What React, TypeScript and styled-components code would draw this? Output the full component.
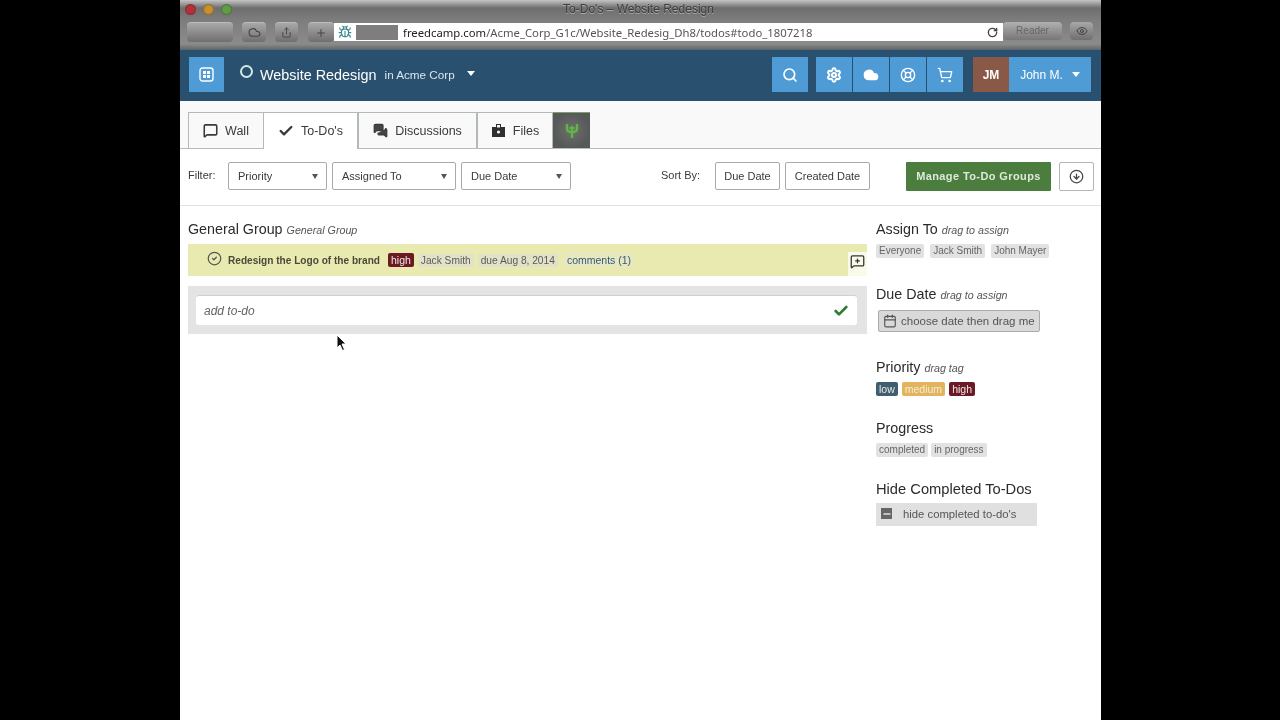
import styled, { createGlobalStyle } from "styled-components";
import {
  Calendar,
  Check,
  CircleCheck,
  CircleArrowDown,
  Cloud,
  LifeBuoy,
  MessageSquare,
  MessageSquarePlus,
  MessagesSquare,
  Minus,
  Plus,
  RotateCw,
  Search,
  Settings,
  ShoppingCart,
  Eye,
  Share,
  Bug,
} from "lucide-react";

const GlobalStyle = createGlobalStyle`
  html, body { margin: 0; padding: 0; background: #000; }
  body { font-family: "Liberation Sans", Arial, sans-serif; color: #333; }
`;

const Screen = styled.div`
  width: 1280px;
  height: 720px;
  display: flex;
  justify-content: center;
  background: #000;
  overflow: hidden;
  position: relative;
`;

const Win = styled.div`
  width: 921px;
  margin-left: 1px;
  height: 720px;
  display: flex;
  flex-direction: column;
  background: #fff;
  filter: blur(0.35px);
`;

/* browser chrome */
const Chrome = styled.div`
  height: 50px;
  flex: none;
  background: linear-gradient(#c4c4c4 0, #6e6e6e 8px, #7d7d7d 20px, #8b8b8b 44px, #5d6468 50px);
  display: flex;
  flex-direction: column;
`;
const TitleBar = styled.div`
  height: 21px;
  flex: none;
  display: flex;
  align-items: center;
  padding-left: 5px;
`;
const Lights = styled.div`
  display: flex;
  gap: 7px;
  margin-top: -2px;
`;
const Light = styled.span<{ $c: string }>`
  width: 11px;
  height: 11px;
  border-radius: 50%;
  background: ${(p) => p.$c};
  box-shadow: inset 0 0 2px #333;
`;
const WinTitle = styled.div`
  flex: 1;
  text-align: center;
  margin-left: -56px;
  margin-top: -3px;
  font-size: 12px;
  color: #3c3c3c;
  text-shadow: 0 1px 0 #aaa;
`;
const ToolRow = styled.div`
  height: 20px;
  margin-top: 1px;
  display: flex;
  align-items: stretch;
  padding-left: 7px;
`;
const ToolBtn = styled.div<{ $w: number; $mr: number }>`
  width: ${(p) => p.$w}px;
  margin-right: ${(p) => p.$mr}px;
  border-radius: 4px;
  background: linear-gradient(#a8a8a8, #6f6f6f);
  border-top: 1px solid #bbb;
  box-sizing: border-box;
  display: flex;
  align-items: center;
  justify-content: center;
  color: #444;
`;
const Address = styled.div`
  width: 669px;
  background: #fff;
  display: flex;
  align-items: center;
  height: 18px;
  margin-top: 1px;
  padding: 0 5px 0 4px;
  box-sizing: border-box;
  font-family: "Noto Sans", sans-serif;
  font-size: 11.3px;
  color: #555;
`;
const FavIcon = styled.span`
  color: #3e8a94;
  display: flex;
  margin-right: 4px;
`;
const Masked = styled.span`
  width: 42px;
  height: 15px;
  background: #7e7e7e;
  margin-right: 5px;
  flex: none;
`;
const Domain = styled.span`
  color: #222;
`;
const Url = styled.span`
  flex: 1;
  white-space: nowrap;
`;
const Reader = styled.div`
  width: 59px;
  height: 18px;
  border-radius: 4px;
  background: linear-gradient(#b0b0b0, #777);
  color: #666;
  font-size: 10px;
  text-align: center;
  line-height: 18px;
`;
const EyeBtn = styled.div`
  width: 23px;
  margin-left: 8px;
  height: 18px;
  border-radius: 4px;
  background: linear-gradient(#a8a8a8, #6f6f6f);
  display: flex;
  align-items: center;
  justify-content: center;
  color: #444;
`;

/* app header */
const Header = styled.header`
  height: 51px;
  flex: none;
  box-sizing: border-box;
  background: #2a5070;
  display: flex;
  align-items: center;
  padding: 0 10px 2px 9px;
  color: #fff;
`;
const HeadBtn = styled.div<{ $w?: number; $bg?: string }>`
  width: ${(p) => p.$w ?? 36}px;
  height: 35px;
  background: ${(p) => p.$bg ?? "#4f9bd5"};
  display: flex;
  align-items: center;
  justify-content: center;
  color: #fff;
  font-size: 12px;
  font-weight: 700;
  gap: 9px;
  flex: none;
`;
const HeadGroup = styled.div<{ $ml: number }>`
  display: flex;
  gap: 1px;
  margin-left: ${(p) => p.$ml}px;
`;
const Ring = styled.span`
  width: 9px;
  height: 9px;
  border: 2px solid #d5e8e4;
  border-radius: 50%;
  margin: -6px 7px 0 16px;
`;
const ProjectName = styled.span`
  font-size: 14.4px;
`;
const ProjectOrg = styled.span`
  font-size: 11.7px;
  color: #dbe6ee;
  margin-left: 8px;
`;
const Caret = styled.span<{ $c?: string }>`
  width: 0;
  height: 0;
  border-left: 4px solid transparent;
  border-right: 4px solid transparent;
  border-top: 5px solid ${(p) => p.$c ?? "#fff"};
`;
const ProjectCaret = styled(Caret)`
  margin: -3px 0 0 12px;
`;
const Grow = styled.div`
  flex: 1;
`;
const UserName = styled.span`
  font-weight: 400;
`;

/* tabs */
const TabBar = styled.nav`
  height: 48px;
  flex: none;
  box-sizing: border-box;
  background: #f9f9f9;
  border-bottom: 1px solid #b9bcbc;
  display: flex;
  align-items: flex-end;
  padding-left: 8px;
`;
const Tab = styled.div<{ $w: number; $active?: boolean }>`
  width: ${(p) => p.$w}px;
  box-sizing: border-box;
  margin-bottom: ${(p) => (p.$active ? "-1px" : "0")};
  height: ${(p) => (p.$active ? "37px" : "36px")};
  background: ${(p) => (p.$active ? "#fff" : "#f9f9f9")};
  border: 1px solid #b3b8b8;
  border-bottom: none;
  border-left-width: ${(p) => (p.$active ? "0" : "1px")};
  display: flex;
  align-items: center;
  justify-content: center;
  gap: 7px;
  font-size: 12.5px;
  color: #3a3a3a;
`;
const AddTab = styled.div`
  width: 37px;
  height: 36px;
  background: radial-gradient(circle at 50% 50%, #6d7068, #56595a 70%);
  border-top: 1px solid #7da06a;
  box-sizing: border-box;
  display: flex;
  align-items: center;
  justify-content: center;
`;

/* filters */
const FilterBar = styled.div`
  height: 57px;
  flex: none;
  box-sizing: border-box;
  border-bottom: 1px solid #e2e2e2;
  display: flex;
  align-items: center;
  padding: 0 7px 2px 8px;
  font-size: 11px;
  color: #3a3a3a;
`;
const FilterLabel = styled.span<{ $w: number }>`
  width: ${(p) => p.$w}px;
  margin-top: -2px;
  flex: none;
`;
const Select = styled.div<{ $w: number }>`
  width: ${(p) => p.$w}px;
  height: 28px;
  box-sizing: border-box;
  border: 1px solid #aaa;
  border-radius: 2px;
  margin-right: 5px;
  padding: 0 8px 0 9px;
  display: flex;
  align-items: center;
  justify-content: space-between;
  background: #fff;
  flex: none;
`;
const SelectCaret = styled(Caret)`
  border-left-width: 3px;
  border-right-width: 3px;
  border-top-color: #555;
`;
const SortBtn = styled(Select)`
  justify-content: center;
  padding: 0;
`;
const Manage = styled.div`
  width: 145px;
  height: 29px;
  background: #4b7d3e;
  color: #dfe9da;
  border-radius: 1px;
  font-size: 11px;
  font-weight: 700;
  letter-spacing: 0.4px;
  display: flex;
  align-items: center;
  justify-content: center;
  margin-left: 31px;
  flex: none;
`;
const DownBtn = styled.div`
  width: 35px;
  height: 29px;
  box-sizing: border-box;
  border: 1px solid #b5b5b5;
  border-radius: 2px;
  margin-left: 8px;
  display: flex;
  align-items: center;
  justify-content: center;
  color: #444;
`;

/* body */
const Content = styled.div`
  flex: 1;
  display: flex;
  padding: 14px 0 0 8px;
`;
const Main = styled.main`
  width: 679px;
  flex: none;
`;
const Side = styled.aside`
  margin-left: 9px;
  flex: 1;
`;
const Heading = styled.h3`
  margin: 0;
  font-size: 14.3px;
  font-weight: 400;
  line-height: 18px;
  color: #2b2b2b;
`;
const WideHeading = styled(Heading)`
  font-size: 14.7px;
`;
const Hint = styled.em`
  font-size: 10.7px;
  line-height: 1;
  color: #555;
  margin-left: 4px;
`;
const TodoRow = styled.div`
  margin-top: 6px;
  height: 32px;
  background: #e9eab0;
  display: flex;
  align-items: center;
  padding-left: 19px;
  font-size: 11px;
  position: relative;
`;
const TodoTitle = styled.span`
  color: #4a4a3c;
  font-weight: 700;
  font-size: 10.1px;
  margin: 0 8px 0 6px;
`;
const DoneIcon = styled.span`
  color: #555;
  display: flex;
  margin-top: -3px;
`;
const Badge = styled.span<{ $bg: string; $fg?: string }>`
  display: inline-flex;
  align-items: center;
  height: 14px;
  padding: 0 3px;
  border-radius: 2px;
  background: ${(p) => p.$bg};
  color: ${(p) => p.$fg ?? "#f0e6e6"};
  font-size: 10.5px;
`;
const Meta = styled.span<{ $link?: boolean }>`
  background: ${(p) => (p.$link ? "#e6e8c0" : "#e2e2c8")};
  color: ${(p) => (p.$link ? "#37587a" : "#5a5a5a")};
  font-size: ${(p) => (p.$link ? "10.5px" : "10.2px")};
  padding: 1px 3px;
  margin-left: ${(p) => (p.$link ? "6px" : "4px")};
`;
const CommentAdd = styled.div`
  position: absolute;
  right: 0;
  top: 8px;
  width: 19px;
  height: 24px;
  padding-top: 2px;
  box-sizing: border-box;
  background: #fafae8;
  color: #333;
  display: flex;
  align-items: flex-start;
  justify-content: center;
`;
const AddBox = styled.div`
  margin-top: 10px;
  height: 48px;
  background: #e4e4e4;
  padding: 9px 10px 9px 8px;
  box-sizing: border-box;
`;
const AddInput = styled.div`
  height: 30px;
  background: #fff;
  border-top: 1px solid #d0d0d0;
  border-radius: 3px;
  box-sizing: border-box;
  display: flex;
  align-items: center;
  justify-content: space-between;
  padding: 0 8px;
  font-size: 12px;
  font-style: italic;
  color: #666;
`;
const GreenCheck = styled.span`
  color: #2e7d32;
  display: flex;
`;
const Chips = styled.div<{ $gap?: number; $mt?: number }>`
  display: flex;
  gap: ${(p) => p.$gap ?? 6}px;
  margin-top: ${(p) => p.$mt ?? 6}px;
  height: 14px;
`;
const Chip = styled.span`
  background: #e2e2e2;
  color: #666;
  font-size: 10px;
  padding: 0 3px;
  border-radius: 2px;
  line-height: 13px;
`;
const Section = styled.section<{ $mt: number }>`
  margin-top: ${(p) => p.$mt}px;
`;
const DateChip = styled.div`
  width: 162px;
  height: 22px;
  margin: 7px 0 0 2px;
  box-sizing: border-box;
  background: #d9d9d9;
  border: 1px solid #aaa;
  border-radius: 2px;
  display: flex;
  align-items: center;
  gap: 4px;
  padding-left: 4px;
  font-size: 11.5px;
  color: #555;
  white-space: nowrap;
  overflow: hidden;
`;
const HideBox = styled.div`
  width: 161px;
  height: 23px;
  margin-top: 5px;
  background: #e0e0e0;
  display: flex;
  align-items: center;
  font-size: 11.3px;
  color: #555;
  padding: 0 0 2px 5px;
  box-sizing: border-box;
`;
const MinusBox = styled.span`
  width: 11px;
  height: 11px;
  background: #666;
  color: #e0e0e0;
  display: flex;
  align-items: center;
  justify-content: center;
  margin-right: 11px;
`;
const Pointer = styled.svg`
  position: absolute;
  left: 336px;
  top: 334px;
`;

const SMALL = 16;

function GridIcon() {
  return (
    <svg width="15" height="15" viewBox="0 0 15 15" fill="none">
      <rect x="1" y="1" width="13" height="13" rx="2.5" stroke="#fff" strokeWidth="1.4" />
      <rect x="4" y="4" width="3" height="3" fill="#fff" />
      <rect x="8" y="4" width="3" height="3" fill="#fff" />
      <rect x="4" y="8" width="3" height="3" fill="#fff" />
      <rect x="8" y="8" width="3" height="3" fill="#fff" />
    </svg>
  );
}

function FilesIcon() {
  return (
    <svg width="15" height="15" viewBox="0 0 15 15">
      <path d="M1 4 H5 V1 H10 V4 H14 V14 H1 Z" fill="#2f2f2f" />
      <rect x="6" y="2" width="3" height="2.5" fill="#f9f9f9" />
      <circle cx="7.5" cy="9" r="1.6" fill="#f9f9f9" />
    </svg>
  );
}

function PlugIcon() {
  return (
    <svg width="16" height="18" viewBox="0 0 16 18" fill="none" stroke="#5fb548" strokeWidth="2.4">
      <path d="M3 2 V7 Q3 10 8 10 Q13 10 13 7 V2" />
      <path d="M8 4 V16" />
      <path d="M5 6 H11" strokeWidth="1.6" />
    </svg>
  );
}

export default function App() {
  return (
    <>
      <GlobalStyle />
      <Screen>
        <Win>
          <Chrome>
            <TitleBar>
              <Lights>
                <Light $c="#b5303c" />
                <Light $c="#c8912e" />
                <Light $c="#5f9e45" />
              </Lights>
              <WinTitle>To-Do's – Website Redesign</WinTitle>
            </TitleBar>
            <ToolRow>
              <ToolBtn $w={46} $mr={9} />
              <ToolBtn $w={24} $mr={9}>
                <Cloud size={13} />
              </ToolBtn>
              <ToolBtn $w={23} $mr={10}>
                <Share size={11} />
              </ToolBtn>
              <ToolBtn $w={26} $mr={0}>
                <Plus size={12} />
              </ToolBtn>
              <Address>
                <FavIcon>
                  <Bug size={14} />
                </FavIcon>
                <Masked />
                <Url>
                  <Domain>freedcamp.com</Domain>/Acme_Corp_G1c/Website_Redesig_Dh8/todos#todo_1807218
                </Url>
                <RotateCw size={11} color="#444" strokeWidth={3} />
              </Address>
              <Reader>Reader</Reader>
              <EyeBtn>
                <Eye size={12} />
              </EyeBtn>
            </ToolRow>
          </Chrome>

          <Header>
            <HeadBtn $w={35}>
              <GridIcon />
            </HeadBtn>
            <Ring />
            <ProjectName>Website Redesign</ProjectName>
            <ProjectOrg>in Acme Corp</ProjectOrg>
            <ProjectCaret />
            <Grow />
            <HeadBtn>
              <Search size={SMALL} strokeWidth={2.5} />
            </HeadBtn>
            <HeadGroup $ml={8}>
              <HeadBtn>
                <Settings size={SMALL} strokeWidth={3} />
              </HeadBtn>
              <HeadBtn>
                <Cloud size={SMALL} fill="#fff" />
              </HeadBtn>
              <HeadBtn>
                <LifeBuoy size={SMALL} />
              </HeadBtn>
              <HeadBtn>
                <ShoppingCart size={SMALL} />
              </HeadBtn>
            </HeadGroup>
            <HeadGroup $ml={10}>
              <HeadBtn $bg="#8a5846">JM</HeadBtn>
            </HeadGroup>
            <HeadBtn $w={82}>
              <UserName>John M.</UserName>
              <Caret />
            </HeadBtn>
          </Header>

          <TabBar>
            <Tab $w={76}>
              <MessageSquare size={15} strokeWidth={2.5} />
              Wall
            </Tab>
            <Tab $w={94} $active>
              <Check size={16} strokeWidth={3.5} />
              To-Do's
            </Tab>
            <Tab $w={119}>
              <MessagesSquare size={15} fill="#444" />
              Discussions
            </Tab>
            <Tab $w={76}>
              <FilesIcon />
              Files
            </Tab>
            <AddTab>
              <PlugIcon />
            </AddTab>
          </TabBar>

          <FilterBar>
            <FilterLabel $w={40}>Filter:</FilterLabel>
            <Select $w={99}>
              Priority
              <SelectCaret />
            </Select>
            <Select $w={124}>
              Assigned To
              <SelectCaret />
            </Select>
            <Select $w={110}>
              Due Date
              <SelectCaret />
            </Select>
            <Grow />
            <FilterLabel $w={54}>Sort By:</FilterLabel>
            <SortBtn $w={65}>Due Date</SortBtn>
            <SortBtn $w={85}>Created Date</SortBtn>
            <Manage>Manage To-Do Groups</Manage>
            <DownBtn>
              <CircleArrowDown size={15} />
            </DownBtn>
          </FilterBar>

          <Content>
            <Main>
              <Heading>
                General Group<Hint>General Group</Hint>
              </Heading>
              <TodoRow>
                <DoneIcon>
                  <CircleCheck size={15} />
                </DoneIcon>
                <TodoTitle>Redesign the Logo of the brand</TodoTitle>
                <Badge $bg="#6b1a24">high</Badge>
                <Meta>Jack Smith</Meta>
                <Meta>due Aug 8, 2014</Meta>
                <Meta $link>comments (1)</Meta>
                <CommentAdd>
                  <MessageSquarePlus size={15} />
                </CommentAdd>
              </TodoRow>
              <AddBox>
                <AddInput>
                  add to-do
                  <GreenCheck>
                    <Check size={16} strokeWidth={4} />
                  </GreenCheck>
                </AddInput>
              </AddBox>
            </Main>
            <Side>
              <Heading>
                Assign To<Hint>drag to assign</Hint>
              </Heading>
              <Chips>
                <Chip>Everyone</Chip>
                <Chip>Jack Smith</Chip>
                <Chip>John Mayer</Chip>
              </Chips>
              <Section $mt={27}>
                <Heading>
                  Due Date<Hint>drag to assign</Hint>
                </Heading>
                <DateChip>
                  <Calendar size={14} />
                  choose date then drag me
                </DateChip>
              </Section>
              <Section $mt={26}>
                <Heading>
                  Priority<Hint>drag tag</Hint>
                </Heading>
                <Chips $gap={4} $mt={6}>
                  <Badge $bg="#3d5f6e">low</Badge>
                  <Badge $bg="#e3b45e" $fg="#f6edd4">
                    medium
                  </Badge>
                  <Badge $bg="#6b1a24">high</Badge>
                </Chips>
              </Section>
              <Section $mt={23}>
                <Heading>Progress</Heading>
                <Chips $gap={3}>
                  <Chip>completed</Chip>
                  <Chip>in progress</Chip>
                </Chips>
              </Section>
              <Section $mt={23}>
                <WideHeading>Hide Completed To-Dos</WideHeading>
                <HideBox>
                  <MinusBox>
                    <Minus size={10} strokeWidth={4} />
                  </MinusBox>
                  hide completed to-do's
                </HideBox>
              </Section>
            </Side>
          </Content>
        </Win>
        <Pointer width="12" height="18" viewBox="0 0 12 18">
          <path d="M1 1 L1 14 L4 11 L6.5 16.5 L8.5 15.5 L6 10 L10 10 Z" fill="#111" stroke="#fff" strokeWidth="1" />
        </Pointer>
      </Screen>
    </>
  );
}
